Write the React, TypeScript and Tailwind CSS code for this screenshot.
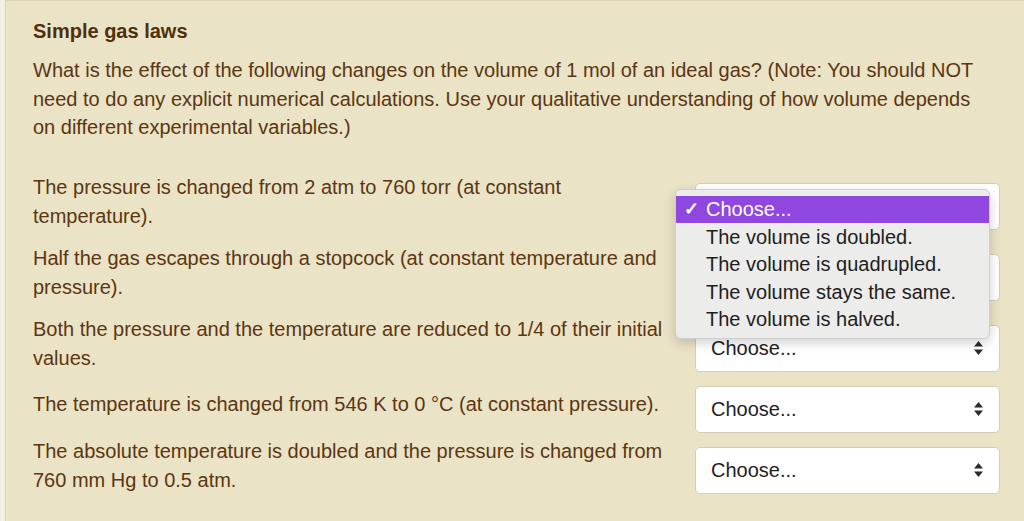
import React from 'react';

const options = [
  'Choose...',
  'The volume is doubled.',
  'The volume is quadrupled.',
  'The volume stays the same.',
  'The volume is halved.',
];

const questions = [
  'The pressure is changed from 2 atm to 760 torr (at constant temperature).',
  'Half the gas escapes through a stopcock (at constant temperature and pressure).',
  'Both the pressure and the temperature are reduced to 1/4 of their initial values.',
  'The temperature is changed from 546 K to 0 °C (at constant pressure).',
  'The absolute temperature is doubled and the pressure is changed from 760 mm Hg to 0.5 atm.',
];

function Arrows() {
  return (
    <svg width="11" height="16" viewBox="0 0 11 16" className="shrink-0">
      <path d="M5.5 1 L10 6.5 L1 6.5 Z" fill="#2b2b2b" />
      <path d="M5.5 15 L10 9.5 L1 9.5 Z" fill="#2b2b2b" />
    </svg>
  );
}

function SelectBox({ open }: { open?: boolean }) {
  return (
    <div className="relative w-[305px] shrink-0">
      <div className="flex h-[47px] items-center justify-between rounded-[5px] border border-[#d3cdbd] bg-white pl-[15px] pr-[15px] text-[20px] text-[#1e1e1e]">
        <span>Choose...</span>
        <Arrows />
      </div>
      {open && (
        <div className="absolute left-[-20px] top-[6px] z-10 w-[315px] rounded-[6px] border border-[#cfcfcf] bg-[#ececea] pt-[6px] pb-[5px] shadow-[0_4px_12px_rgba(0,0,0,0.18)]">
          {options.map((opt, i) => (
            <div
              key={opt}
              className={
                i === 0
                  ? 'flex h-[27.5px] items-center bg-[#9047e0] text-[20px] text-white'
                  : 'flex h-[27.5px] items-center text-[20px] text-[#1e1e1e]'
              }
            >
              <span className="w-[30px] pl-[8px] text-[18px] font-bold">{i === 0 ? '✓' : ''}</span>
              <span>{opt}</span>
            </div>
          ))}
        </div>
      )}
    </div>
  );
}

export default function App() {
  return (
    <div
      className="h-[521px] w-[1024px] overflow-hidden bg-[#f3efe0]"
      style={{ fontFamily: '"Liberation Sans", Arial, sans-serif' }}
    >
      <div className="ml-[5px] h-[530px] w-[1029px] border-l border-t border-[#ddd3b0] bg-[#ebe3c6] pl-[27px] pr-[34px] pt-[16px] text-[#5a3611]">
        <h2 className="text-[20px] font-bold leading-[28px] text-[#4f2f0c]">Simple gas laws</h2>
        <p className="mt-[11px] max-w-[960px] text-[20px] leading-[28.5px]">
          What is the effect of the following changes on the volume of 1 mol of an ideal gas? (Note: You should NOT
          need to do any explicit numerical calculations. Use your qualitative understanding of how volume depends
          on different experimental variables.)
        </p>
        <div className="mt-[29px] flex flex-col">
          {questions.map((q, i) => (
            <div key={i} className="flex items-center justify-between py-[2px]">
              <p className="mb-[9px] w-[640px] text-[20px] leading-[29px]">{q}</p>
              <SelectBox open={i === 0} />
            </div>
          ))}
        </div>
      </div>
    </div>
  );
}
